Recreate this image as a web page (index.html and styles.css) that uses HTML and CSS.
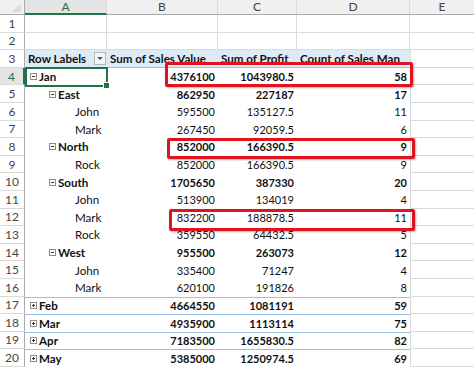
FILE: index.html
```html
<!DOCTYPE html>
<html>
<head>
  <meta charset="UTF-8">
  <title>Pivot Table</title>
  <link rel="stylesheet" href="styles.css">
</head>
<body>
  <div class="sheet">
    <div class="grid">
      <div class="corner"><span class="corner-mark"></span></div>
      <div class="col-head active">A</div>
      <div class="col-head">B</div>
      <div class="col-head">C</div>
      <div class="col-head">D</div>
      <div class="col-head last">E</div>

      <div class="row-head">1</div>
      <div class="cell blank"></div><div class="cell blank"></div><div class="cell blank"></div><div class="cell blank"></div><div class="cell blank-e"></div>

      <div class="row-head">2</div>
      <div class="cell blank"></div><div class="cell blank"></div><div class="cell blank"></div><div class="cell blank"></div><div class="cell blank-e"></div>

      <div class="row-head">3</div>
      <div class="cell pivot-head label">Row Labels <span class="filter-btn"></span></div>
      <div class="cell pivot-head">Sum of Sales Value</div>
      <div class="cell pivot-head">Sum of Profit</div>
      <div class="cell pivot-head">Count of Sales Man</div>
      <div class="cell side"></div>

      <div class="row-head active">4</div>
      <div class="cell bold lvl0"><span class="toggle minus"></span>Jan</div>
      <div class="cell num bold">4376100</div>
      <div class="cell num bold">1043980.5</div>
      <div class="cell num bold">58</div>
      <div class="cell side"></div>

      <div class="row-head">5</div>
      <div class="cell bold lvl1"><span class="toggle minus"></span>East</div>
      <div class="cell num bold">862950</div>
      <div class="cell num bold">227187</div>
      <div class="cell num bold">17</div>
      <div class="cell side"></div>

      <div class="row-head">6</div>
      <div class="cell lvl2">John</div>
      <div class="cell num">595500</div>
      <div class="cell num">135127.5</div>
      <div class="cell num">11</div>
      <div class="cell side"></div>

      <div class="row-head">7</div>
      <div class="cell lvl2">Mark</div>
      <div class="cell num">267450</div>
      <div class="cell num">92059.5</div>
      <div class="cell num">6</div>
      <div class="cell side"></div>

      <div class="row-head">8</div>
      <div class="cell bold lvl1"><span class="toggle minus"></span>North</div>
      <div class="cell num bold">852000</div>
      <div class="cell num bold">166390.5</div>
      <div class="cell num bold">9</div>
      <div class="cell side"></div>

      <div class="row-head">9</div>
      <div class="cell lvl2">Rock</div>
      <div class="cell num">852000</div>
      <div class="cell num">166390.5</div>
      <div class="cell num">9</div>
      <div class="cell side"></div>

      <div class="row-head">10</div>
      <div class="cell bold lvl1"><span class="toggle minus"></span>South</div>
      <div class="cell num bold">1705650</div>
      <div class="cell num bold">387330</div>
      <div class="cell num bold">20</div>
      <div class="cell side"></div>

      <div class="row-head">11</div>
      <div class="cell lvl2">John</div>
      <div class="cell num">513900</div>
      <div class="cell num">134019</div>
      <div class="cell num">4</div>
      <div class="cell side"></div>

      <div class="row-head">12</div>
      <div class="cell lvl2">Mark</div>
      <div class="cell num">832200</div>
      <div class="cell num">188878.5</div>
      <div class="cell num">11</div>
      <div class="cell side"></div>

      <div class="row-head">13</div>
      <div class="cell lvl2">Rock</div>
      <div class="cell num">359550</div>
      <div class="cell num">64432.5</div>
      <div class="cell num">5</div>
      <div class="cell side"></div>

      <div class="row-head">14</div>
      <div class="cell bold lvl1"><span class="toggle minus"></span>West</div>
      <div class="cell num bold">955500</div>
      <div class="cell num bold">263073</div>
      <div class="cell num bold">12</div>
      <div class="cell side"></div>

      <div class="row-head">15</div>
      <div class="cell lvl2">John</div>
      <div class="cell num">335400</div>
      <div class="cell num">71247</div>
      <div class="cell num">4</div>
      <div class="cell side"></div>

      <div class="row-head">16</div>
      <div class="cell lvl2">Mark</div>
      <div class="cell num">620100</div>
      <div class="cell num">191826</div>
      <div class="cell num">8</div>
      <div class="cell side"></div>

      <div class="row-head">17</div>
      <div class="cell month bold lvl0"><span class="toggle plus"></span>Feb</div>
      <div class="cell month num bold">4664550</div>
      <div class="cell month num bold">1081191</div>
      <div class="cell month num bold">59</div>
      <div class="cell side"></div>

      <div class="row-head">18</div>
      <div class="cell month bold lvl0"><span class="toggle plus"></span>Mar</div>
      <div class="cell month num bold">4935900</div>
      <div class="cell month num bold">1113114</div>
      <div class="cell month num bold">75</div>
      <div class="cell side"></div>

      <div class="row-head">19</div>
      <div class="cell month bold lvl0"><span class="toggle plus"></span>Apr</div>
      <div class="cell month num bold">7183500</div>
      <div class="cell month num bold">1655830.5</div>
      <div class="cell month num bold">82</div>
      <div class="cell side"></div>

      <div class="row-head">20</div>
      <div class="cell month bold lvl0"><span class="toggle plus"></span>May</div>
      <div class="cell month num bold">5385000</div>
      <div class="cell month num bold">1250974.5</div>
      <div class="cell month num bold">69</div>
      <div class="cell side"></div>
    </div>

    <!-- active cell A4 -->
    <div class="selection"><span class="fill-handle"></span></div>

    <!-- hand-drawn highlight boxes -->
    <div class="mark mark-jan"></div>
    <div class="mark mark-north"></div>
    <div class="mark mark-mark"></div>
  </div>
</body>
</html>
```

FILE: styles.css
```css
:root {
  --grid: #dadada;
  --head-line: #ababab;
  --head-bg: #f0f0f0;
  --head-text: #444444;
  --pivot-fill: #ddebf7;
  --pivot-line: #9bc2e6;
  --excel-green: #217346;
  --red: #e0141e;
}

body {
  margin: 0;
  background: #ffffff;
  font-family: Lato, "Liberation Sans", sans-serif;
  color: #111111;
}

.sheet {
  position: relative;
  width: 474px;
  height: 370px;
  overflow: hidden;
}

.grid {
  display: grid;
  grid-template-columns: 25px 82px 111px 79px 113px 64px;
  grid-template-rows: 15px repeat(20, 17.6px);
}

.corner {
  background: var(--head-bg);
  border-right: 1px solid var(--head-line);
  border-bottom: 1px solid var(--head-line);
  box-sizing: border-box;
  position: relative;
}

.corner-mark {
  position: absolute;
  right: 3px;
  bottom: 2px;
  width: 0;
  height: 0;
  border-left: 9px solid transparent;
  border-bottom: 9px solid #dcdcdc;
}

.col-head {
  background: var(--head-bg);
  border-right: 1px solid var(--grid);
  border-bottom: 1px solid var(--head-line);
  box-sizing: border-box;
  color: var(--head-text);
  font-size: 12px;
  text-align: center;
  line-height: 14px;
}

.col-head.active {
  background: #e4e4e4;
  color: var(--excel-green);
  border-bottom: 2px solid var(--excel-green);
}

.col-head.last {
  border-right: none;
}

.row-head {
  border-right: 1px solid var(--head-line);
  border-bottom: 1px solid var(--grid);
  box-sizing: border-box;
  color: var(--head-text);
  font-size: 12px;
  text-align: center;
  display: flex;
  align-items: center;
  justify-content: center;
}

.row-head.active {
  background: #e4e4e4;
  color: var(--excel-green);
  border-right: 2px solid var(--excel-green);
}

.cell {
  box-sizing: border-box;
  font-size: 11.6px;
  display: flex;
  align-items: center;
  padding: 0 3px;
  white-space: nowrap;
  overflow: hidden;
}

.cell.blank {
  border-right: 1px solid var(--grid);
  border-bottom: 1px solid var(--grid);
}

.cell.blank-e,
.cell.side {
  border-bottom: 1px solid var(--grid);
}

.cell.side {
  border-left: 1px solid var(--grid);
}

.cell.pivot-head {
  background: var(--pivot-fill);
  border-bottom: 1px solid var(--pivot-line);
  font-weight: 700;
}

.cell.label {
  position: relative;
}

.cell.month {
  border-top: 1px solid var(--pivot-line);
}

.cell.num {
  justify-content: flex-end;
  font-size: 11px;
}

.bold {
  font-weight: 700;
}

.lvl0 {
  padding-left: 5px;
}

.lvl1 {
  padding-left: 24px;
}

.lvl2 {
  padding-left: 50px;
}

.toggle {
  position: relative;
  width: 7px;
  height: 7px;
  border: 1px solid #8c8c8c;
  box-sizing: border-box;
  margin-right: 2px;
  flex: none;
}

.toggle::before {
  content: '';
  position: absolute;
  left: 1px;
  top: 2px;
  width: 3px;
  height: 1px;
  background: #333333;
}

.toggle.plus::after {
  content: '';
  position: absolute;
  left: 2px;
  top: 1px;
  width: 1px;
  height: 3px;
  background: #333333;
}

.filter-btn {
  position: absolute;
  right: 1px;
  top: 2px;
  width: 12px;
  height: 13px;
  box-sizing: border-box;
  border: 1px solid #b8b8b8;
  background: #f6f6f6;
}

.filter-btn::after {
  content: '';
  position: absolute;
  left: 2px;
  top: 4px;
  border-left: 3px solid transparent;
  border-right: 3px solid transparent;
  border-top: 3px solid #555555;
}

.selection {
  position: absolute;
  left: 25px;
  top: 67px;
  width: 83px;
  height: 20px;
  box-sizing: border-box;
  border: 2px solid var(--excel-green);
}

.fill-handle {
  position: absolute;
  right: -4px;
  bottom: -4px;
  width: 5px;
  height: 5px;
  background: var(--excel-green);
  border: 1px solid #ffffff;
}

.mark {
  position: absolute;
  border: 3px solid var(--red);
  border-radius: 2px;
  box-shadow: 1px 1px 2px rgba(0, 0, 0, 0.3);
  box-sizing: border-box;
}

.mark-jan {
  left: 165px;
  top: 62px;
  width: 248px;
  height: 25px;
}

.mark-north {
  left: 167px;
  top: 138px;
  width: 248px;
  height: 21px;
}

.mark-mark {
  left: 169px;
  top: 209px;
  width: 246px;
  height: 22px;
}
```
